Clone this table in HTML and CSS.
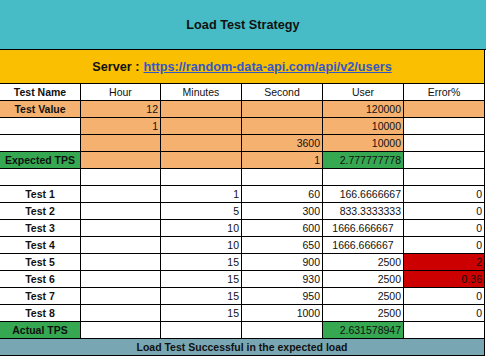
FILE: index.html
```html
<!DOCTYPE html>
<html>
<head>
<meta charset="utf-8">
<link rel="stylesheet" href="styles.css">
</head>
<body>
<div class="title">Load Test Strategy</div>
<div class="server">Server : <a class="link" href="#">https://random-data-api.com/api/v2/users</a></div>
<div class="grid">
  <div class="c b ctr">Test Name</div><div class="c ctr">Hour</div><div class="c ctr">Minutes</div><div class="c ctr">Second</div><div class="c ctr">User</div><div class="c ctr">Error%</div>

  <div class="c b ctr o">Test Value</div><div class="c r o">12</div><div class="c o"></div><div class="c o"></div><div class="c r o">120000</div><div class="c o"></div>

  <div class="c"></div><div class="c r o">1</div><div class="c o"></div><div class="c o"></div><div class="c r o">10000</div><div class="c"></div>

  <div class="c"></div><div class="c o"></div><div class="c o"></div><div class="c r o">3600</div><div class="c r o">10000</div><div class="c"></div>

  <div class="c b ctr g">Expected TPS</div><div class="c o"></div><div class="c o"></div><div class="c r o">1</div><div class="c r g">2.777777778</div><div class="c"></div>

  <div class="c"></div><div class="c"></div><div class="c"></div><div class="c"></div><div class="c"></div><div class="c"></div>

  <div class="c b ctr">Test 1</div><div class="c"></div><div class="c r">1</div><div class="c r">60</div><div class="c r">166.6666667</div><div class="c r">0</div>
  <div class="c b ctr">Test 2</div><div class="c"></div><div class="c r">5</div><div class="c r">300</div><div class="c r">833.3333333</div><div class="c r">0</div>
  <div class="c b ctr">Test 3</div><div class="c"></div><div class="c r">10</div><div class="c r">600</div><div class="c ctr">1666.666667</div><div class="c r">0</div>
  <div class="c b ctr">Test 4</div><div class="c"></div><div class="c r">10</div><div class="c r">650</div><div class="c ctr">1666.666667</div><div class="c r">0</div>
  <div class="c b ctr">Test 5</div><div class="c"></div><div class="c r">15</div><div class="c r">900</div><div class="c r">2500</div><div class="c r red">2</div>
  <div class="c b ctr">Test 6</div><div class="c"></div><div class="c r">15</div><div class="c r">930</div><div class="c r">2500</div><div class="c r red">0.36</div>
  <div class="c b ctr">Test 7</div><div class="c"></div><div class="c r">15</div><div class="c r">950</div><div class="c r">2500</div><div class="c r">0</div>
  <div class="c b ctr">Test 8</div><div class="c"></div><div class="c r">15</div><div class="c r">1000</div><div class="c r">2500</div><div class="c r">0</div>

  <div class="c b ctr g">Actual TPS</div><div class="c"></div><div class="c"></div><div class="c"></div><div class="c r g">2.631578947</div><div class="c"></div>
</div>
<div class="footer">Load Test Successful in the expected load</div>
</body>
</html>
```
FILE: styles.css
```css
html, body {
  margin: 0;
  padding: 0;
  background: #ffffff;
}
body {
  font-family: "Liberation Sans", Arial, sans-serif;
  color: #111;
  width: 486px;
}
.title {
  height: 49px;
  background: #47bcc6;
  border-bottom: 1px solid #000;
  display: flex;
  align-items: center;
  justify-content: center;
  font-weight: bold;
  font-size: 12.7px;
  padding-top: 1px;
  box-sizing: content-box;
  height: 48px;
}
.server {
  width: 484px;
  height: 33px;
  background: #f9bf00;
  border-bottom: 1px solid #000;
  border-right: 1px solid #000;
  display: flex;
  align-items: center;
  justify-content: center;
  font-weight: bold;
  font-size: 12.7px;
  gap: 4px;
}
.link {
  color: #3457c8;
  text-decoration: underline;
}
.grid {
  display: grid;
  grid-template-columns: 81px 80px 81px 81px 81px 81px;
  grid-auto-rows: 17px;
  width: 485px;
}
.c {
  box-sizing: border-box;
  border-right: 1px solid #000;
  border-bottom: 1px solid #000;
  font-size: 10.5px;
  line-height: 16px;
  padding: 0 2px;
  white-space: nowrap;
  overflow: hidden;
  background: #fff;
}
.b { font-weight: bold; }
.ctr { text-align: center; }
.r { text-align: right; }
.o { background: #f5b16f; }
.g { background: #36a852; }
.red { background: #cc0000; }
.footer {
  width: 484px;
  height: 17px;
  box-sizing: border-box;
  width: 485px;
  background: #78a7b3;
  border-right: 1px solid #000;
  border-bottom: 1px solid #000;
  font-weight: bold;
  font-size: 10.5px;
  line-height: 16px;
  text-align: center;
}
```
